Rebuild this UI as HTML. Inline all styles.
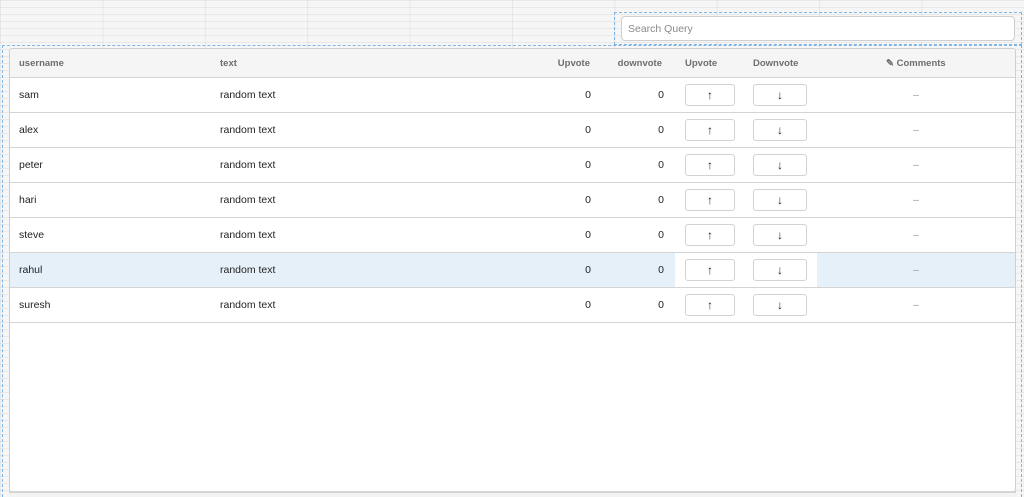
<!DOCTYPE html>
<html><head><style>
*{box-sizing:border-box;margin:0;padding:0}
html,body{width:1024px;height:497px;overflow:hidden}
body{font-family:"Liberation Sans",sans-serif;font-size:10.5px;color:#1f1f1f;position:relative;
background-color:#f6f6f6;
background-image:linear-gradient(90deg,rgba(0,0,0,0.06) 1px,transparent 1px),linear-gradient(rgba(0,0,0,0.05) 1px,transparent 1px);
background-size:102.4px 100%,100% 7px;}
.search{position:absolute;left:614px;top:12px;width:408px;height:33px;border:1px dashed #7fb6e8}
.search div{position:absolute;left:6px;top:3px;right:6px;height:25px;background:#fff;border:1px solid #cfcfcf;border-radius:4px;color:#8a8a8a;padding:6px 6px;font-size:10.5px}
.wrap{position:absolute;left:2px;top:45px;width:1020px;height:452px;border:1px dashed #7fb6e8;border-bottom:none}
.tbl{position:absolute;left:9px;top:48px;width:1007px;height:444px;background:#fff;border:1px solid #cfcfcf;border-radius:3px;overflow:hidden}
.bot{position:absolute;left:9px;top:491px;width:1007px;height:6px;background:#f3f3f3;border-top:2px solid #d4d4d4}
.row{position:absolute;left:0;width:100%;height:35px;border-bottom:1px solid #d4d4d4}
.hd{top:0;height:29px;background:#f5f5f5;color:#6e6e6e;font-weight:bold;font-size:9.5px}
.c{position:absolute;top:0;height:100%;display:flex;align-items:center}
.b{width:50px;height:22px;border:1px solid #d2d2d2;border-radius:3px;background:#fff;justify-content:center;top:6px;height:22px;font-size:12px}
</style></head><body>
<div class="search"><div>Search Query</div></div>
<div class="wrap"></div>
<div class="tbl">
<div class="row hd">
<div class="c" style="left:9px">username</div>
<div class="c" style="left:210px">text</div>
<div class="c" style="right:425px">Upvote</div>
<div class="c" style="right:353px">downvote</div>
<div class="c" style="left:675px">Upvote</div>
<div class="c" style="left:743px">Downvote</div>
<div class="c" style="left:876px">✎&nbsp;Comments</div>
</div>
</div>
<div class="bot"></div>
<script>
var names=["sam","alex","peter","hari","steve","rahul","suresh"],h="";
names.forEach(function(n,i){var t=29+i*35;var hl=n=="rahul";
h+='<div class="row" style="top:'+t+'px">'+(hl?'<div style="position:absolute;left:0;top:0;width:665px;height:34px;background:#e6f0f9"></div><div style="position:absolute;left:807px;right:0;top:0;height:34px;background:#e6f0f9"></div>':'')+
'<div class="c" style="left:9px">'+n+'</div><div class="c" style="left:210px">random text</div><div class="c" style="right:424px">0</div><div class="c" style="right:351px">0</div>'+
'<div class="c b" style="left:675px">↑</div><div class="c b" style="left:743px;width:54px">↓</div><div class="c" style="left:903px;color:#999">–</div></div>';});
document.querySelector('.tbl').insertAdjacentHTML('beforeend',h);
</script>
</body></html>
